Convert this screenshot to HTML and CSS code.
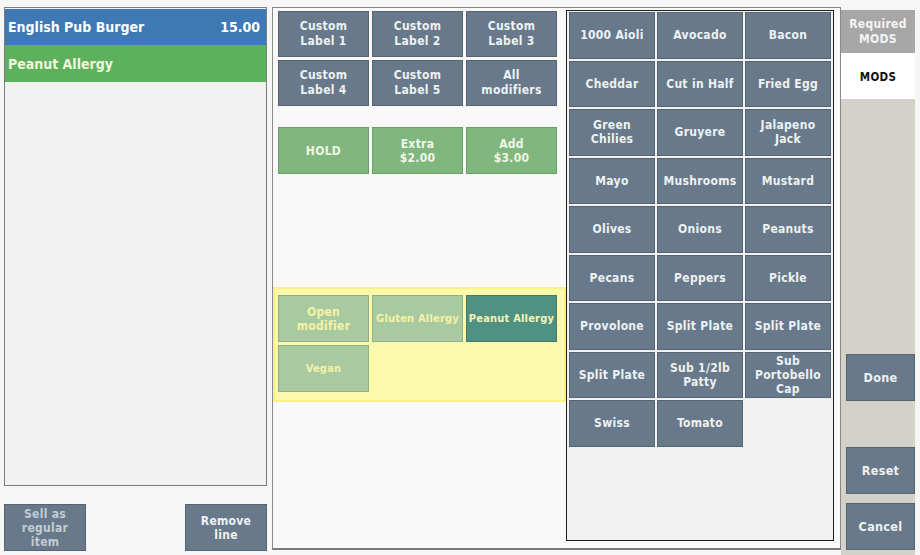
FILE: index.html
```html
<!DOCTYPE html>
<html lang="en">
<head>
  <meta charset="UTF-8" />
  <meta name="viewport" content="width=device-width, initial-scale=1.0"/>
  <title>Modifiers</title>
  <link rel="stylesheet" href="styles.css">
</head>
<body>
  <div class="order">
    <div class="ticket">
      <div class="line item"><span>English Pub Burger</span><span>15.00</span></div>
      <div class="line mod"><span>Peanut Allergy</span></div>
    </div>
    <div class="order-actions">
      <button class="btn disabled">Sell as<br>regular<br>item</button>
      <button class="btn">Remove<br>line</button>
    </div>
  </div>

  <div class="mods-panel">
    <div class="mods-left">
      <div class="label-grid">
        <button class="btn">Custom<br>Label 1</button>
        <button class="btn">Custom<br>Label 2</button>
        <button class="btn">Custom<br>Label 3</button>
        <button class="btn">Custom<br>Label 4</button>
        <button class="btn">Custom<br>Label 5</button>
        <button class="btn">All<br>modifiers</button>
      </div>

      <div class="price-grid">
        <button class="btn green">HOLD</button>
        <button class="btn green">Extra<br>$2.00</button>
        <button class="btn green">Add<br>$3.00</button>
      </div>

      <div class="allergy-zone">
        <button class="btn pale">Open<br>modifier</button>
        <button class="btn pale small">Gluten Allergy</button>
        <button class="btn teal small">Peanut Allergy</button>
        <button class="btn pale small">Vegan</button>
      </div>
    </div>

    <div class="mod-box">
      <button class="btn">1000 Aioli</button>
      <button class="btn">Avocado</button>
      <button class="btn">Bacon</button>
      <button class="btn">Cheddar</button>
      <button class="btn">Cut in Half</button>
      <button class="btn">Fried Egg</button>
      <button class="btn">Green<br>Chilies</button>
      <button class="btn">Gruyere</button>
      <button class="btn">Jalapeno<br>Jack</button>
      <button class="btn">Mayo</button>
      <button class="btn">Mushrooms</button>
      <button class="btn">Mustard</button>
      <button class="btn">Olives</button>
      <button class="btn">Onions</button>
      <button class="btn">Peanuts</button>
      <button class="btn">Pecans</button>
      <button class="btn">Peppers</button>
      <button class="btn">Pickle</button>
      <button class="btn">Provolone</button>
      <button class="btn">Split Plate</button>
      <button class="btn">Split Plate</button>
      <button class="btn">Split Plate</button>
      <button class="btn">Sub 1/2lb<br>Patty</button>
      <button class="btn">Sub<br>Portobello<br>Cap</button>
      <button class="btn">Swiss</button>
      <button class="btn">Tomato</button>
    </div>
  </div>

  <div class="side">
    <div class="tab">Required<br>MODS</div>
    <div class="tab active">MODS</div>
    <div class="side-actions">
      <button class="btn done">Done</button>
      <button class="btn reset">Reset</button>
      <button class="btn cancel">Cancel</button>
    </div>
  </div>
</body>
</html>
```

FILE: styles.css
```css
body {
  margin: 0;
  height: 555px;
  overflow: hidden;
  display: flex;
  align-items: flex-start;
  background: #f6f6f6;
  font-family: "DejaVu Sans Condensed", "DejaVu Sans", sans-serif;
  font-stretch: condensed;
  font-weight: bold;
  font-size: 12px;
}
.btn {
  font: inherit;
  font-stretch: condensed;
  line-height: 14px;
  letter-spacing: 0.3px;
  background: #67798a;
  color: #eef2f3;
  border: 1px solid #55646f;
  padding: 0;
  margin: 0;
  cursor: pointer;
  display: flex;
  align-items: center;
  justify-content: center;
  text-align: center;
}
.btn.disabled {
  color: #c3ccd2;
}

/* left: order ticket */
.order {
  margin: 7px 0 0 4px;
  width: 263px;
  display: flex;
  flex-direction: column;
}
.ticket {
  height: 476px;
  border: 1px solid #7c7c7c;
  background: #f2f2f2;
  padding-top: 1px;
}
.line {
  display: flex;
  justify-content: space-between;
  align-items: center;
  padding: 0 6px 0 3px;
  font-size: 14px;
}
.line.item {
  height: 36px;
  background: #3e79b5;
  color: #fff;
}
.line.mod {
  height: 37px;
  background: #5db15c;
  color: #f2f7dc;
}
.order-actions {
  margin-top: 18px;
  display: flex;
  justify-content: space-between;
}
.order-actions .btn {
  width: 82px;
  height: 47px;
}

/* middle */
.mods-panel {
  margin: 7px 0 0 5px;
  width: 567px;
  height: 540px;
  border: 1px solid #8a8a8a;
  border-bottom: 2px solid #7a7a7a;
  background: #f9f9f9;
  display: flex;
}
.mods-left {
  width: 293px;
  display: flex;
  flex-direction: column;
}
.label-grid,
.price-grid,
.allergy-zone {
  display: grid;
  grid-template-columns: repeat(3, 91px);
  gap: 3px;
  padding: 0 5px;
}
.label-grid {
  margin-top: 3px;
  grid-auto-rows: 46px;
}
.label-grid .btn {
  line-height: 15px;
}
.price-grid {
  margin-top: 21px;
  grid-auto-rows: 47px;
}
.btn.green {
  background: #80b77e;
  border-color: #6a9f69;
  color: #f1f6e4;
}
.allergy-zone {
  margin-top: 113px;
  height: 97px;
  padding: 8px 5px 10px;
  grid-auto-rows: 47px;
  background: #fdf9ab;
  box-shadow: inset 0 0 0 2px #f8f286;
}
.btn.small {
  font-size: 11px;
  letter-spacing: 0.2px;
}
.btn.pale {
  background: #a9caa1;
  border-color: #8fb089;
  color: #f6f2a6;
}
.btn.teal {
  background: #4f9182;
  border-color: #3f7a6c;
  color: #f7f4b8;
}

.mod-box {
  margin: 2px 0 0 0;
  width: 262px;
  height: 527px;
  padding: 1px 2px;
  border: 1px solid #1c1c1c;
  background: #f2f2f2;
  display: grid;
  grid-template-columns: repeat(3, 86px);
  grid-auto-rows: 46.5px;
  gap: 2px;
  align-content: start;
}

/* right side */
.side {
  margin: 10px 0 0 0;
  width: 74px;
  display: flex;
  flex-direction: column;
}
.tab {
  height: 43px;
  background: #a7a7a7;
  color: #f4f4f4;
  display: flex;
  align-items: center;
  justify-content: center;
  text-align: center;
  line-height: 15px;
  letter-spacing: 0.3px;
}
.tab.active {
  height: 46px;
  box-sizing: border-box;
  padding-top: 17px;
  align-items: flex-start;
  background: #fff;
  color: #111;
  font-size: 11.5px;
}
.side-actions {
  height: 456px;
  background: #d4d1ca;
  display: flex;
  flex-direction: column;
  align-items: flex-end;
}
.side-actions .btn {
  width: 69px;
  height: 47px;
  font-size: 12.5px;
}
.done {
  margin-top: 255px;
}
.reset {
  margin-top: 46px;
}
.cancel {
  margin-top: 9px;
}
```
